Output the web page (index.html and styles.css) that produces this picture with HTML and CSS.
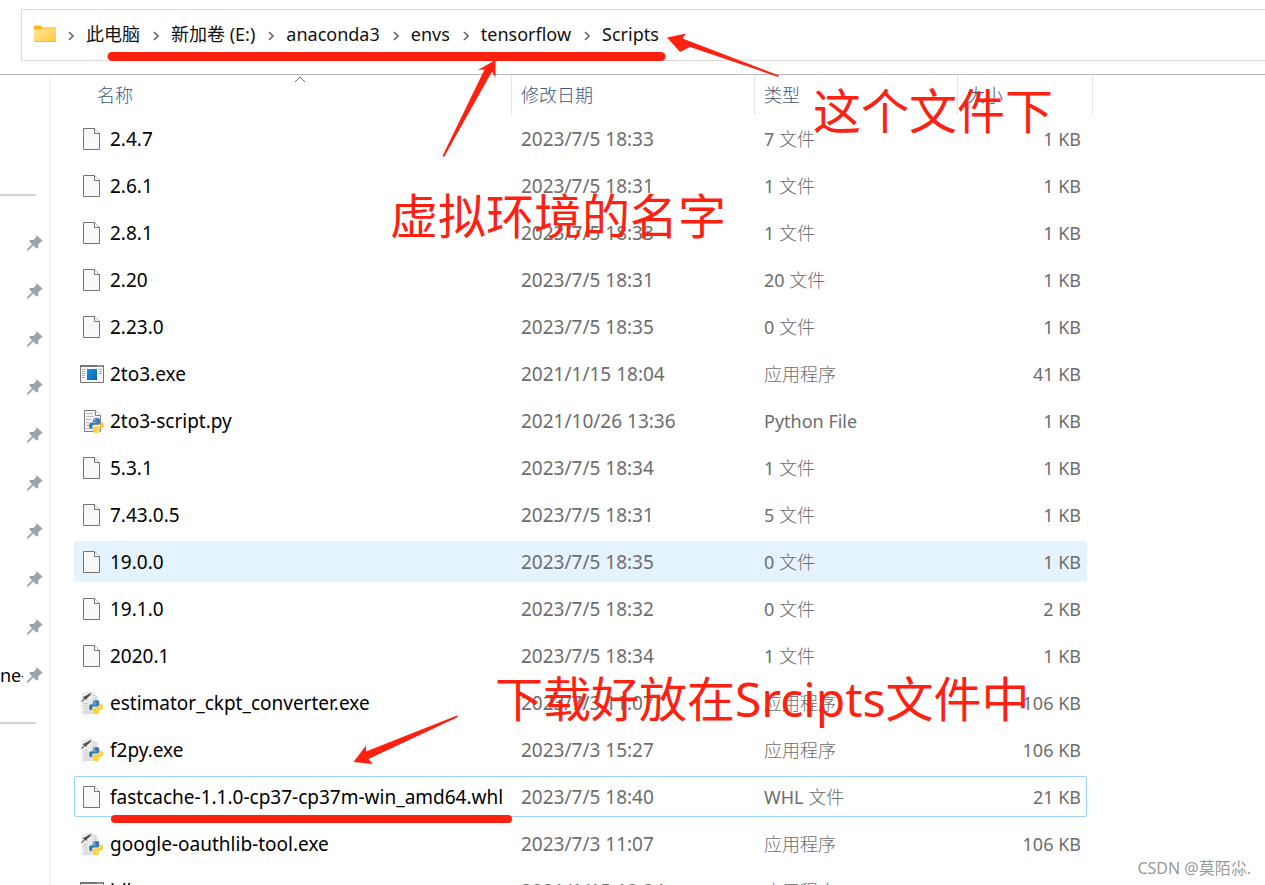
FILE: index.html
```
<!DOCTYPE html>
<html lang="zh-CN">
<head>
<meta charset="utf-8">
<title>Scripts</title>
<link rel="stylesheet" href="styles.css">
</head>
<body>
<svg class="defs" aria-hidden="true">
  <defs>
    <linearGradient id="g-folder" x1="0" y1="0" x2="1" y2="1"><stop offset="0" stop-color="#ffe6a0"/><stop offset="1" stop-color="#ffca3a"/></linearGradient>
    <linearGradient id="g-app" x1="0" y1="0" x2="1" y2="1"><stop offset="0" stop-color="#1a93e0"/><stop offset="1" stop-color="#0a62b8"/></linearGradient>
    <symbol id="file" viewBox="0 0 24 24">
      <path d="M3.5 1.5h11l5 5v16h-16z" fill="#f9f9f9" stroke="#747474"/>
      <path d="M14.500 1.500v5h5" fill="#fff" stroke="#747474"/>
    </symbol>
    <symbol id="app" viewBox="0 0 24 24">
      <path d="M.5 3.500h23v17H.5z" fill="#fafafa" stroke="#757575"/>
      <path d="M0 3h24v2H0z" fill="#757575"/>
      <path d="M17.500 4h1M19.500 4h1M21.500 4h1" stroke="#ddd"/>
      <path d="M7 7h10v11H7z" fill="url(#g-app)"/>
      <path d="M2 7.500h3M2 9.500h3M2 11.500h3M2 13.500h3M2 15.500h3M19 7.500h3M19 9.500h3M19 11.500h3" stroke="#a9a9a9"/>
    </symbol>
    <symbol id="snake" viewBox="0 0 14 14">
      <path d="M7 0C4.500 0 3.700.8 3.700 2.300V3.700H7.200V4.300H2.200C.7 4.300 0 5.500 0 7.300s.7 3 2.200 3H3.200V8.400C3.200 7 4 6.400 5.300 6.400H8.600C9.700 6.400 10.300 5.800 10.300 4.700V2.300C10.300.7 9.300 0 7 0z" fill="#3b79ae"/>
      <circle cx="5.300" cy="1.900" r=".7" fill="#fff"/>
      <path d="M7 14c2.500 0 3.300-.8 3.300-2.300V10.300H6.800V9.700h5c1.500 0 2.200-1.200 2.200-3s-.7-3-2.200-3H10.900V5.600C10.900 7 10 7.600 8.700 7.600H5.400C4.300 7.600 3.700 8.200 3.700 9.300v2.400C3.700 13.300 4.700 14 7 14z" fill="#ffd033"/>
      <circle cx="8.700" cy="12.100" r=".7" fill="#fff"/>
    </symbol>
    <symbol id="python" viewBox="0 0 24 24">
      <path d="M4.500 1.500h11l5 5v16h-16z" fill="#f4f4f4" stroke="#7d7d7d"/>
      <path d="M15.500 1.500v5h5" fill="#fff" stroke="#7d7d7d"/>
      <path d="M6 4.500h7M6 7.500h8M6 10.500h5M6 13.500h3M6 16.500h3M6 19.500h6" stroke="#bdbdbd"/>
      <use href="#snake" x="9" y="9" width="15" height="15"/>
    </symbol>
    <symbol id="pyexe" viewBox="0 0 24 24">
      <path d="M2 2c4-1.500 9-1.500 12 0 4 2 5 5 5 9v12l-17 .5z" fill="#ebebeb"/>
      <path d="M3 12.500h5M3 15h5M4 17.500h4M4 20h7M3 22h9M11 3.500l6 2M12 8l5-1" fill="none" stroke="#cfcfcf"/>
      <path d="M1 10.500 4.500 7 2 6.500 5.500 5 11.500 1.500 10 4.500 7 7 6.500 9 5.300 7.800 1.800 11z" fill="#4a4a4a"/>
      <use href="#snake" x="9" y="9" width="14" height="14"/>
    </symbol>
    <symbol id="pin" viewBox="0 0 16 16">
      <path d="M9.500 0 16 6.300 13.800 6.700 11.300 9.500 11 13.200 9.600 13.500 6.300 10.500 1.300 15.500H0V14.300L5 9.200 2.300 6.400 2.800 5H6.500L9 2.300z" fill="#98a2aa"/>
    </symbol>
    <symbol id="folder" viewBox="0 0 22 18">
      <path d="M0 1.500Q0 .5 1 .5H7L8.500 2.500H22V7H0z" fill="#f8b61c"/>
      <path d="M0 4.500H7.500L9 3.500H22V17H0z" fill="url(#g-folder)"/>
      <path d="M0 16.500h22" stroke="#efb942"/>
    </symbol>
    <symbol id="chevron" viewBox="0 0 6 10">
      <path d="M1 1l4 4-4 4" fill="none" stroke="#6b6b6b" stroke-width="1.700"/>
    </symbol>
  </defs>
</svg>

<div class="explorer">
  <header class="toolbar">
    <nav class="address" aria-label="路径">
      <svg class="folder"><use href="#folder"/></svg>
      <ol class="crumbs">
        <li><svg class="chevron"><use href="#chevron"/></svg><a href="#">此电脑</a></li>
        <li><svg class="chevron"><use href="#chevron"/></svg><a href="#">新加卷 (E:)</a></li>
        <li><svg class="chevron"><use href="#chevron"/></svg><a href="#">anaconda3</a></li>
        <li><svg class="chevron"><use href="#chevron"/></svg><a href="#">envs</a></li>
        <li><svg class="chevron"><use href="#chevron"/></svg><a href="#">tensorflow</a></li>
        <li><svg class="chevron"><use href="#chevron"/></svg><a href="#">Scripts</a></li>
      </ol>
    </nav>
  </header>

  <div class="body">
    <aside class="sidebar">
      <hr>
      <ul class="pins">
        <li><svg><use href="#pin"/></svg></li>
        <li><svg><use href="#pin"/></svg></li>
        <li><svg><use href="#pin"/></svg></li>
        <li><svg><use href="#pin"/></svg></li>
        <li><svg><use href="#pin"/></svg></li>
        <li><svg><use href="#pin"/></svg></li>
        <li><svg><use href="#pin"/></svg></li>
        <li><svg><use href="#pin"/></svg></li>
        <li><svg><use href="#pin"/></svg></li>
        <li><span>ne-</span><svg><use href="#pin"/></svg></li>
      </ul>
      <hr>
    </aside>

    <main class="content">
      <table class="files">
        <thead>
          <tr>
            <th scope="col" class="sorted">名称<svg class="sort" viewBox="0 0 12 7"><path d="M1 6l5-5 5 5" fill="none" stroke="#6b6b6b"/></svg></th>
            <th scope="col">修改日期</th><th scope="col">类型</th><th scope="col">大小</th>
          </tr>
        </thead>
        <tbody>
          <tr><td class="name"><svg><use href="#file"/></svg>2.4.7</td><td class="date">2023/7/5 18:33</td><td>7 文件</td><td class="size">1 KB</td></tr>
          <tr><td class="name"><svg><use href="#file"/></svg>2.6.1</td><td class="date">2023/7/5 18:31</td><td>1 文件</td><td class="size">1 KB</td></tr>
          <tr><td class="name"><svg><use href="#file"/></svg>2.8.1</td><td class="date">2023/7/5 18:33</td><td>1 文件</td><td class="size">1 KB</td></tr>
          <tr><td class="name"><svg><use href="#file"/></svg>2.20</td><td class="date">2023/7/5 18:31</td><td>20 文件</td><td class="size">1 KB</td></tr>
          <tr><td class="name"><svg><use href="#file"/></svg>2.23.0</td><td class="date">2023/7/5 18:35</td><td>0 文件</td><td class="size">1 KB</td></tr>
          <tr><td class="name"><svg><use href="#app"/></svg>2to3.exe</td><td class="date">2021/1/15 18:04</td><td>应用程序</td><td class="size">41 KB</td></tr>
          <tr><td class="name"><svg><use href="#python"/></svg>2to3-script.py</td><td class="date">2021/10/26 13:36</td><td>Python File</td><td class="size">1 KB</td></tr>
          <tr><td class="name"><svg><use href="#file"/></svg>5.3.1</td><td class="date">2023/7/5 18:34</td><td>1 文件</td><td class="size">1 KB</td></tr>
          <tr><td class="name"><svg><use href="#file"/></svg>7.43.0.5</td><td class="date">2023/7/5 18:31</td><td>5 文件</td><td class="size">1 KB</td></tr>
          <tr class="hovered"><td class="name"><svg><use href="#file"/></svg>19.0.0</td><td class="date">2023/7/5 18:35</td><td>0 文件</td><td class="size">1 KB</td></tr>
          <tr><td class="name"><svg><use href="#file"/></svg>19.1.0</td><td class="date">2023/7/5 18:32</td><td>0 文件</td><td class="size">2 KB</td></tr>
          <tr><td class="name"><svg><use href="#file"/></svg>2020.1</td><td class="date">2023/7/5 18:34</td><td>1 文件</td><td class="size">1 KB</td></tr>
          <tr><td class="name"><svg><use href="#pyexe"/></svg>estimator_ckpt_converter.exe</td><td class="date">2023/7/3 11:07</td><td>应用程序</td><td class="size">106 KB</td></tr>
          <tr><td class="name"><svg><use href="#pyexe"/></svg>f2py.exe</td><td class="date">2023/7/3 15:27</td><td>应用程序</td><td class="size">106 KB</td></tr>
          <tr class="focused"><td class="name"><svg><use href="#file"/></svg>fastcache-1.1.0-cp37-cp37m-win_amd64.whl</td><td class="date">2023/7/5 18:40</td><td>WHL 文件</td><td class="size">21 KB</td></tr>
          <tr><td class="name"><svg><use href="#pyexe"/></svg>google-oauthlib-tool.exe</td><td class="date">2023/7/3 11:07</td><td>应用程序</td><td class="size">106 KB</td></tr>
          <tr><td class="name"><svg><use href="#app"/></svg>idle.exe</td><td class="date">2021/1/15 18:04</td><td>应用程序</td><td class="size">41 KB</td></tr>
        </tbody>
      </table>
    </main>
  </div>

  <svg class="marks" aria-hidden="true">
    <path class="stroke" d="M112 56.500H661" stroke-width="9"/>
    <path class="stroke" d="M115 819H508" stroke-width="8"/>
    <path d="M495.500 60V77.500L492 71.500 444 157 442.500 156 484.500 69.500 478 70z"/>
    <path d="M667 37.500 686 33.500 682.500 38.500 779 75.500 778.500 77 690 47 680 52z"/>
    <path d="M353.500 762 366 745.500V751.500L457 715.500 458 717 368.500 759 373 764z"/>
  </svg>
  <p class="note note-folder">这个文件下</p>
  <p class="note note-env">虚拟环境的名字</p>
  <p class="note note-download">下载好放在Srcipts文件中</p>
  <p class="watermark">CSDN @莫陌尛.</p>
</div>
</body>
</html>
```
FILE: styles.css
```
* { box-sizing: border-box; }

body {
  margin: 0;
  background: #fff;
  color: #000;
  font: 18px/24px "Noto Sans", "Noto Sans CJK SC", sans-serif;
}

ol, ul, p { margin: 0; padding: 0; list-style: none; }

.defs { position: absolute; width: 0; height: 0; }

.explorer {
  position: relative;
  display: flex;
  flex-direction: column;
  height: 100vh;
  overflow: hidden;
}

.toolbar {
  flex: none;
  padding: 9px 0 13px 21px;
  border-bottom: 1px solid #b9b9b9;
}

.address {
  display: flex;
  align-items: center;
  height: 52px;
  padding: 0 0 2px 12px;
  border: 1px solid #d9d9d9;
  border-right: 0;
}

.folder { width: 22px; height: 18px; }
.crumbs { display: flex; }
.crumbs li { display: flex; align-items: center; }
.crumbs a { color: #111; text-decoration: none; }
.chevron { width: 6px; height: 10px; margin: 3px 12px 0; }
.crumbs li + li .chevron { margin-left: 13px; }

.body { display: flex; flex: 1; min-height: 0; }

.sidebar {
  flex: none;
  width: 51px;
  padding-top: 119px;
  border-right: 2px solid #f5f5f5;
}

.sidebar hr {
  width: 36px;
  height: 2px;
  margin: 0;
  border: 0;
  background: #d3d3d3;
}

.pins { padding: 23px 0; }
.pins li {
  display: flex;
  justify-content: flex-end;
  align-items: center;
  gap: 4px;
  height: 48px;
  padding-right: 6px;
}
.pins span { flex: 1; min-width: 0; overflow: hidden; }
.pins svg { flex: none; width: 16px; height: 16px; }

.content { flex: 1; min-width: 0; padding-left: 23px; }

.files, .files thead, .files tbody { display: block; }
.files tr {
  display: grid;
  grid-template-columns: 438px 243px 203px 1fr;
  align-items: center;
  width: 1013px;
  height: 41px;
  margin-bottom: 6px;
  border: 1px solid transparent;
  border-radius: 2px;
}
.files thead tr {
  align-items: stretch;
  width: 1019px;
  height: 40px;
  margin-bottom: 3px;
  border: 0;
}
.files th {
  padding: 8px 0 0 9px;
  border-right: 1px solid #e3e3e3;
  color: #43587a;
  font-family: "Noto Sans", "Noto Sans CJK SC Light", "Noto Sans CJK SC", sans-serif;
  font-weight: 400;
  text-align: left;
}
.files th.sorted { position: relative; padding-left: 23px; }
.sort {
  position: absolute;
  top: 1px;
  left: 220px;
  width: 12px;
  height: 7px;
}
.files td {
  padding: 0 0 0 8px;
  color: #6d6d6d;
  font-family: "Noto Sans", "Noto Sans CJK SC Light", "Noto Sans CJK SC", sans-serif;
}
.files td.name {
  display: flex;
  align-items: center;
  gap: 6px;
  padding-left: 5px;
  color: #000;
  font-size: 19px;
}
.files td.date { font-size: 19px; }
.files td.size { padding: 0 5px 0 0; text-align: right; }
.name svg { flex: none; width: 24px; height: 24px; }

.files tr.hovered { background: #e5f3ff; }
.files tr.focused { border-color: #99d1ff; }

.marks {
  position: absolute;
  inset: 0;
  width: 100%;
  height: 100%;
  fill: #ff2010;
  pointer-events: none;
}
.marks .stroke { stroke: #ff2010; stroke-linecap: round; }

.note {
  position: absolute;
  color: #ff2010;
  font-size: 48px;
  line-height: 64px;
  white-space: nowrap;
}
.note-folder { left: 813px; top: 79px; }
.note-env { left: 390px; top: 184px; }
.note-download { left: 495px; top: 667px; }

.watermark {
  position: absolute;
  right: 14px;
  bottom: 5px;
  color: #999;
  font-size: 16px;
}
```
